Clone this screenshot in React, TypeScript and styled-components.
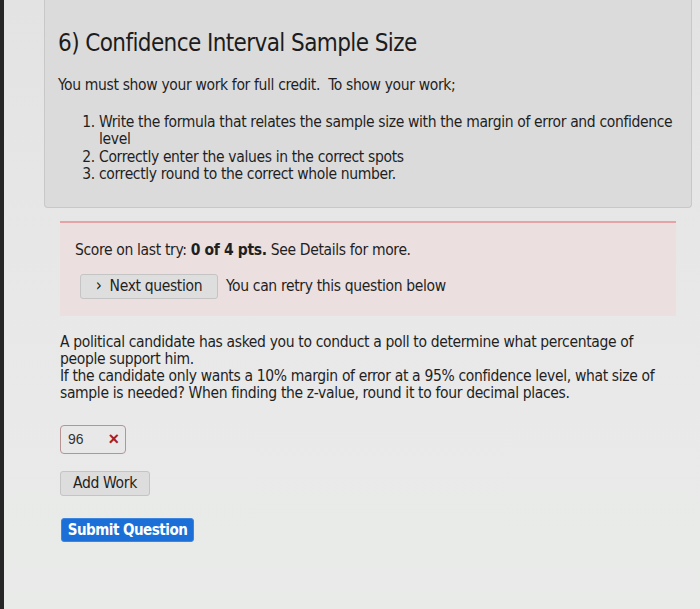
import React from "react";
import styled, { createGlobalStyle } from "styled-components";

const Global = createGlobalStyle`
  html, body { margin: 0; padding: 0; }
  body {
    background: #e8e8e7;
    font-family: "Liberation Sans Narrow", "DejaVu Sans Condensed", "Liberation Sans", sans-serif;
    color: #1f1f1f;
    letter-spacing: -0.35px;
  }
`;

const Screen = styled.div`
  width: 700px;
  height: 609px;
  display: flex;
  overflow: hidden;
  background: linear-gradient(180deg, #e4e3e4 0%, #e8e8e8 50%, #e9ebe9 100%);
`;

const Bezel = styled.div`
  width: 4px;
  flex: none;
  background: #262626;
`;

const Page = styled.div`
  flex: 1;
  padding: 0 8px 0 40px;
  display: flex;
  flex-direction: column;
`;

const IntroBox = styled.section`
  margin-top: -4px;
  padding: 32px 16px 23px 13px;
  background: #dcdbdc;
  border: 1px solid #c9c8c9;
  border-top: none;
  border-radius: 0 0 4px 4px;
  width: 648px;
  box-sizing: border-box;
`;

const Title = styled.h1`
  margin: 0;
  font-size: 24px;
  font-weight: normal;
  line-height: 30px;
  letter-spacing: -0.6px;
  color: #1c1c1c;
`;

const Para = styled.p`
  margin: 18px 0 0;
  font-size: 15.5px;
  line-height: 18px;
`;

const Steps = styled.ol`
  margin: 20px 0 0;
  padding-left: 41px;
  font-size: 15.5px;
  line-height: 17.4px;
`;

const Feedback = styled.section`
  margin: 13px 0 0 16px;
  width: 616px;
  box-sizing: border-box;
  border-top: 2px solid #e6a2a5;
  background: #ebdfe0;
  padding: 18px 15px 17px 15px;
`;

const ScoreLine = styled.div`
  font-size: 15.5px;
  line-height: 18px;
  b { font-weight: bold; }
`;

const NextRow = styled.div`
  margin-top: 15px;
  margin-left: 5px;
  display: flex;
  align-items: center;
  gap: 8px;
  font-size: 15.5px;
`;

const GreyButton = styled.button<{ $w: number }>`
  width: ${(p) => p.$w}px;
  height: 25px;
  box-sizing: border-box;
  background: #dfdedf;
  border: 1px solid #c5c4c5;
  border-radius: 3px;
  font: inherit;
  font-size: 15.5px;
  letter-spacing: -0.35px;
  color: #1f1f1f;
  padding: 0;
  display: flex;
  align-items: center;
  justify-content: center;
  gap: 8px;
  white-space: nowrap;
`;

const Chevron = styled.span`
  font-size: 17px;
  line-height: 1;
  margin-top: -2px;
`;

const Question = styled.div`
  margin-top: 18px;
  margin-left: 16px;
  display: flex;
  flex-direction: column;
  align-items: flex-start;
`;

const QText = styled.p`
  margin: 0;
  font-size: 15.5px;
  line-height: 17px;
  width: 600px;
`;

const AnswerBox = styled.div`
  margin-top: 23px;
  width: 66px;
  height: 29px;
  box-sizing: border-box;
  border: 1px solid #b59494;
  border-radius: 4px;
  background: #e9e8e8;
  display: flex;
  align-items: center;
  justify-content: space-between;
  padding: 0 6px 0 7px;
  font-family: "Liberation Sans", sans-serif;
  font-size: 14px;
  letter-spacing: 0;
  color: #333;
`;

const Cross = styled.span`
  color: #a3202c;
  font-size: 18px;
  font-weight: bold;
`;

const AddWork = styled(GreyButton)`
  margin-top: 17px;
  background: #dedddd;
`;

const Submit = styled.button`
  margin-top: 22px;
  margin-left: 1px;
  width: 133px;
  height: 24px;
  box-sizing: border-box;
  background: #1b6fd6;
  border: 1px solid #3d86e0;
  border-radius: 3px;
  color: #fff;
  font: inherit;
  font-size: 15px;
  font-weight: bold;
  letter-spacing: -0.5px;
  white-space: nowrap;
  padding: 0;
`;

export default function App() {
  return (
    <>
      <Global />
      <Screen>
        <Bezel />
        <Page>
          <IntroBox>
            <Title>6) Confidence Interval Sample Size</Title>
            <Para>You must show your work for full credit.&nbsp; To show your work;</Para>
            <Steps>
              <li>Write the formula that relates the sample size with the margin of error and confidence level</li>
              <li>Correctly enter the values in the correct spots</li>
              <li>correctly round to the correct whole number.</li>
            </Steps>
          </IntroBox>
          <Feedback>
            <ScoreLine>
              Score on last try: <b>0 of 4 pts.</b> See Details for more.
            </ScoreLine>
            <NextRow>
              <GreyButton $w={138}>
                <Chevron>›</Chevron>Next question
              </GreyButton>
              <span>You can retry this question below</span>
            </NextRow>
          </Feedback>
          <Question>
            <QText>
              A political candidate has asked you to conduct a poll to determine what percentage of people support him.
              <br />
              If the candidate only wants a 10% margin of error at a 95% confidence level, what size of sample is needed? When finding the z-value, round it to four decimal places.
            </QText>
            <AnswerBox>
              <span>96</span>
              <Cross>×</Cross>
            </AnswerBox>
            <AddWork $w={90}>Add Work</AddWork>
            <Submit>Submit Question</Submit>
          </Question>
        </Page>
      </Screen>
    </>
  );
}
